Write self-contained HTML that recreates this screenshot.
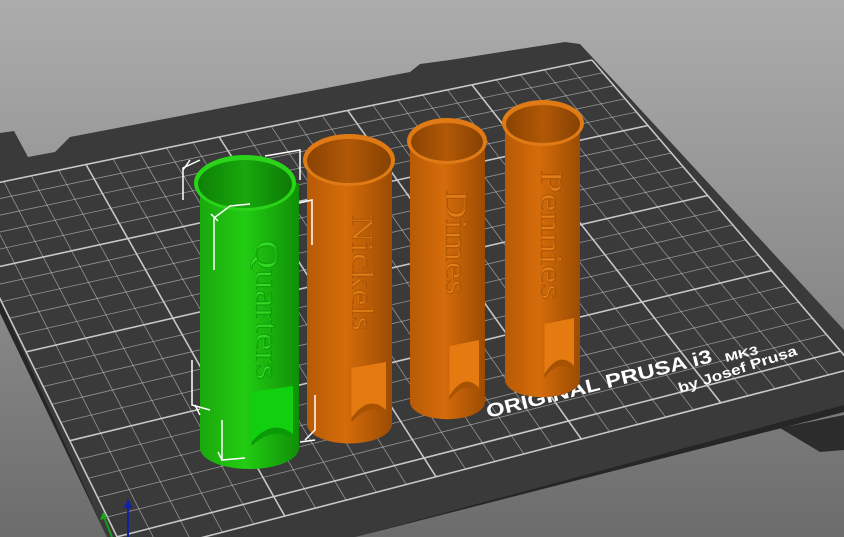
<!DOCTYPE html>
<html><head><meta charset="utf-8"><style>
html,body{margin:0;padding:0;width:844px;height:537px;overflow:hidden;background:linear-gradient(#acacac,#8a8a8a 55%,#6c6c6c);}
svg{position:absolute;left:0;top:0}
</style></head><body>
<svg id="s" width="844" height="537" viewBox="0 0 844 537" xmlns="http://www.w3.org/2000/svg" font-family="Liberation Sans, sans-serif">
<defs>
<linearGradient id="g" x1="0" x2="1"><stop offset="0" stop-color="#1aa80c"/><stop offset=".45" stop-color="#22cc12"/><stop offset="1" stop-color="#109008"/></linearGradient>
<linearGradient id="o" x1="0" x2="1"><stop offset="0" stop-color="#b85a06"/><stop offset=".45" stop-color="#d56c0a"/><stop offset="1" stop-color="#9c4c04"/></linearGradient>
<linearGradient id="gi" x1="0" x2="1"><stop offset="0" stop-color="#0e8006"/><stop offset=".5" stop-color="#18a80c"/><stop offset="1" stop-color="#0e7a06"/></linearGradient>
<linearGradient id="oi" x1="0" x2="1"><stop offset="0" stop-color="#8a4404"/><stop offset=".5" stop-color="#b25806"/><stop offset="1" stop-color="#864204"/></linearGradient>
</defs>
<polygon points="780,428 844,415 844,450 820,452" fill="#2c2c2c"/>
<polygon points="0,133 14,131 28,157 55,152 70,137 410,72 420,64 450,60 565,42 580,44 844,330 844,412 355,537 107,537 0,313" fill="#3a3a3a"/>
<polygon points="0,300 107,537 355,537 844,405 844,412 355,537 107,537 0,313" fill="#262626"/>
<g id="grid" stroke="#cfcfcf" fill="none"></g>
<g fill="#fff" font-weight="bold">
<text x="0" y="0" font-size="19" textLength="232" lengthAdjust="spacingAndGlyphs" transform="translate(488,418) rotate(-14)">ORIGINAL PRUSA i3</text>
<text x="0" y="0" font-size="12" textLength="34" lengthAdjust="spacingAndGlyphs" transform="translate(726,362) rotate(-14)">MK3</text>
<text x="0" y="0" font-size="14" textLength="124" lengthAdjust="spacingAndGlyphs" transform="translate(680,393) rotate(-18)">by Josef Prusa</text>
</g>
<g id="cyl"></g>
<g stroke="#fff" stroke-width="1.5" fill="none">
<path d="M183,200 V168 L200,160"/><path d="M183,170 L190,160"/>
<path d="M265,156 L300,150 V180"/>
<path d="M214,218 L230,206 L250,204 M214,218 V270 M211,214 L218,221"/>
<path d="M299,203 L312,200 V245"/>
<path d="M192,360 V405 L210,410 M195,405 L200,415"/>
<path d="M222,420 V460 L245,458 M222,460 L218,452"/>
<path d="M315,395 V430 L305,440 M300,442 L315,440"/>
</g>
<g>
<path d="M128,537 V506" stroke="#1020a0" stroke-width="2"/><polygon points="124,508 128,499 132,508" fill="#1020b0"/>
<path d="M112,537 L104,517" stroke="#1a9a1a" stroke-width="2"/><polygon points="100,520 103,512 108,518" fill="#20a020"/>
</g>
</svg>
<script>
function H(p){
var x0=p[0][0],y0=p[0][1],x1=p[1][0],y1=p[1][1],x2=p[2][0],y2=p[2][1],x3=p[3][0],y3=p[3][1];
var dx1=x1-x2,dx2=x3-x2,dy1=y1-y2,dy2=y3-y2,sx=x0-x1+x2-x3,sy=y0-y1+y2-y3;
var d=dx1*dy2-dx2*dy1,g=(sx*dy2-dx2*sy)/d,h=(dx1*sy-sx*dy1)/d;
var a=x1-x0+g*x1,b=x3-x0+h*x3,c=x0,dd=y1-y0+g*y1,e=y3-y0+h*y3,f=y0;
return function(u,v){var w=g*u+h*v+1;return[(a*u+b*v+c)/w,(dd*u+e*v+f)/w];};}
var m=H([[-52,193],[592,60],[855,368],[127,557]]);
var G=document.getElementById('grid'),s='';
var NU=25,NV=21;
for(var i=0;i<=NU;i++){var u=i/NU,a=m(u,0),b=m(u,1),maj=(i%5==0);
s+='<line x1="'+a[0]+'" y1="'+a[1]+'" x2="'+b[0]+'" y2="'+b[1]+'" stroke-width="'+(maj?1.6:0.8)+'" stroke-opacity="'+(maj?0.95:0.6)+'"/>';}
for(var j=0;j<=NV;j++){var v=j/NV,a=m(0,v),b=m(1,v),maj=(j%5==0||j==NV);
s+='<line x1="'+a[0]+'" y1="'+a[1]+'" x2="'+b[0]+'" y2="'+b[1]+'" stroke-width="'+(maj?1.6:0.8)+'" stroke-opacity="'+(maj?0.95:0.6)+'"/>';}
G.innerHTML=s;
var C=[
 {cx:245,cy:183,rx:51,ry:28,bl:200,br:299,bot:448,g:'g',gi:'gi',rim:'#2ad418',t:'Quarters',tx:256,ty:240,len:140,cut:'#10d010',ck:'#0a9a06',hl:'#3ae02a',fs:34},
 {cx:349,cy:160,rx:46,ry:26,bl:307,br:392,bot:424,g:'o',gi:'oi',rim:'#e07a14',t:'Nickels',tx:352,ty:215,len:116,cut:'#e47a10',ck:'#a85204',hl:'#e8831c',fs:32},
 {cx:447,cy:141,rx:40,ry:23,bl:410,br:485,bot:402,g:'o',gi:'oi',rim:'#e07a14',t:'Dimes',tx:446,ty:190,len:105,cut:'#e47a10',ck:'#a85204',hl:'#e8831c',fs:32},
 {cx:543,cy:123,rx:41,ry:23,bl:505,br:580,bot:380,g:'o',gi:'oi',rim:'#e07a14',t:'Pennies',tx:541,ty:170,len:130,cut:'#e47a10',ck:'#a85204',hl:'#e8831c',fs:32}];
var out='';
C.forEach(function(c){
var ry2=c.ry*0.75, mid=(c.bl+c.br)/2, hw=(c.br-c.bl)/2;
out+='<path d="M'+c.bl+','+c.cy+' V'+c.bot+' A'+hw+','+ry2+' 0 0 0 '+c.br+','+c.bot+' V'+c.cy+' Z" fill="url(#'+c.g+')"/>';
out+='<ellipse cx="'+c.cx+'" cy="'+c.cy+'" rx="'+c.rx+'" ry="'+c.ry+'" fill="'+c.rim+'"/>';
out+='<ellipse cx="'+c.cx+'" cy="'+(c.cy+1)+'" rx="'+(c.rx-4)+'" ry="'+(c.ry-4)+'" fill="url(#'+c.gi+')"/>';
var x0=mid+2,x1=c.br-6,yb=c.bot-8,yt=yb-48;
out+='<path d="M'+x0+','+yt+' L'+x1+','+(yt-6)+' V'+(yb-6)+' Q'+((x0+x1)/2)+','+(yb-22)+' '+x0+','+(yb+2)+' Z" fill="'+c.cut+'"/>';
out+='<path d="M'+x0+','+(yb+2)+' Q'+((x0+x1)/2)+','+(yb-22)+' '+x1+','+(yb-6)+' L'+x1+','+(yb-1)+' Q'+((x0+x1)/2)+','+(yb-14)+' '+x0+','+(yb+6)+' Z" fill="'+c.ck+'"/>';
var tt='<text transform="translate(TX,'+c.ty+') rotate(90)" font-family="Liberation Serif, serif" font-size="'+c.fs+'" textLength="'+c.len+'" lengthAdjust="spacingAndGlyphs" FILL>'+c.t+'</text>';
out+=tt.replace('TX',c.tx-1).replace('FILL','fill="'+c.hl+'" fill-opacity=".8"');
out+=tt.replace('TX',c.tx).replace('FILL','fill="none" stroke="'+c.ck+'" stroke-width="1" stroke-opacity=".8"');
});
document.getElementById('cyl').innerHTML=out;
</script>
</body></html>
